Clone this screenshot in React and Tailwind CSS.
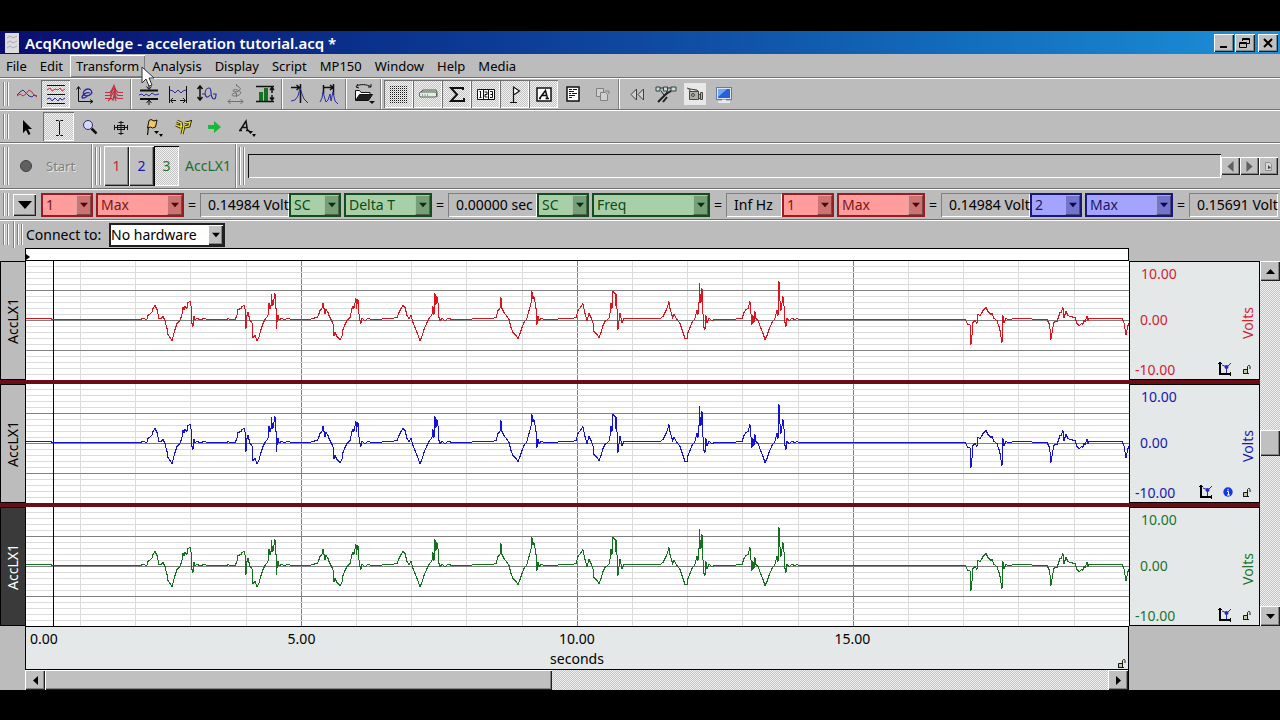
import React from 'react';
import clsx from 'clsx';

const CHANNELS = [
  { id: 1, label: 'AccLX1', color: '#dc1420', text: 'text-[#d02434]', active: false, info: false },
  { id: 2, label: 'AccLX1', color: '#1414d0', text: 'text-[#1818b0]', active: false, info: true },
  { id: 3, label: 'AccLX1', color: '#147020', text: 'text-[#1e742c]', active: true, info: false },
];

const MENUS = ['File', 'Edit', 'Transform', 'Analysis', 'Display', 'Script', 'MP150', 'Window', 'Help', 'Media'];

const MEASUREMENTS = [
  { tone: 'red', channel: '1', kind: 'Max', value: '0.14984 Volts' },
  { tone: 'green', channel: 'SC', kind: 'Delta T', value: '0.00000 sec' },
  { tone: 'green', channel: 'SC', kind: 'Freq', value: 'Inf Hz', wide: true },
  { tone: 'red', channel: '1', kind: 'Max', value: '0.14984 Volts' },
  { tone: 'blue', channel: '2', kind: 'Max', value: '0.15691 Volts' },
];

const TONES = {
  white: { box: 'bg-white border-[#202020] text-black', btn: 'bg-[#bcbcbc]' },
  red: { box: 'bg-[#ff9c9c] border-[#981c20] text-[#781818]', btn: 'bg-[#cc7474] text-[#500808]' },
  green: { box: 'bg-[#a8d0a8] border-[#144c1c] text-[#104818]', btn: 'bg-[#78a078] text-[#083010]' },
  blue: { box: 'bg-[#a4a4ff] border-[#181878] text-[#181860]', btn: 'bg-[#7474cc] text-[#080850]' },
};

const RAISED = 'bg-[#c0c0c0] shadow-[inset_1px_1px_#fff,inset_-1px_-1px_#202020,inset_-2px_-2px_#848484]';
const DITHER = 'bg-[repeating-conic-gradient(#f2f2f2_0_25%,#c2c2c2_0_50%)] bg-[length:2px_2px]';

const WAVE =
  '0,57 24,57 27,58 114,58 117,57 121,58 122,54 126,51 127,47 129,44 131,48 133,57 135,57 137,55 139,59 141,67 142,73 144,76 146,79 147,76 149,68 151,62 154,59 156,53 157,46 158,48 159,45 161,47 162,41 164,40 165,44 166,62 167,65 168,55 169,58 171,57 174,58 179,57 181,58 201,58 202,57 204,58 209,58 211,54 212,48 215,47 216,45 218,44 219,47 220,67 221,54 222,51 224,59 226,61 227,76 229,74 231,79 233,76 235,68 237,62 239,58 242,54 243,42 244,47 245,44 245,32 247,44 248,38 249,32 250,47 250,67 252,54 253,58 256,57 258,58 262,57 266,58 ' +
  '284,58 286,57 291,56 292,55 294,49 296,47 297,42 298,47 299,52 300,48 302,51 303,54 305,58 307,62 308,74 309,71 311,75 314,78 316,75 317,68 319,63 321,59 324,56 326,47 327,45 328,47 330,37 330,47 332,38 333,52 334,59 335,62 336,57 339,59 342,57 346,58 ' +
  '366,57 371,56 373,51 375,47 377,44 379,46 381,54 383,57 385,54 387,61 389,66 391,71 394,79 396,75 398,68 401,61 403,57 406,53 407,45 408,53 409,32 410,43 411,35 412,41 413,56 414,59 416,57 419,59 422,57 427,58 ' +
  '466,57 470,56 472,49 474,47 475,36 476,47 478,51 481,55 483,58 485,66 487,71 490,74 492,77 494,72 496,66 498,61 501,57 503,49 505,42 506,30 507,37 508,35 509,40 510,47 510,59 511,63 512,55 513,59 515,57 519,58 ' +
  '546,57 550,56 552,49 555,45 557,42 559,52 561,59 563,52 565,56 567,61 568,70 571,73 573,76 575,71 577,64 579,60 583,57 584,52 585,42 586,47 587,30 589,32 589,44 590,32 591,47 592,68 594,52 596,61 598,57 ' +
  '634,57 637,55 640,49 642,44 643,40 644,47 646,54 646,57 648,53 651,58 654,62 657,71 659,77 661,77 662,71 664,66 666,61 669,57 671,49 672,53 673,41 673,21 674,32 675,41 676,27 677,52 678,66 679,68 680,54 681,61 683,57 686,59 689,58 ' +
  '709,58 711,57 716,57 718,51 720,48 722,47 724,40 725,52 726,63 727,54 728,61 729,50 730,57 732,59 735,67 737,72 739,78 741,74 743,68 746,61 749,57 751,49 752,54 753,20 754,39 755,49 757,35 757,36 758,44 759,61 760,65 761,57 763,59 766,57 769,58 771,57 773,58 ' +
  '939,58 942,63 944,63 945,83 946,74 947,61 949,59 951,62 952,53 954,54 956,51 957,49 960,46 962,50 965,53 966,52 968,57 971,59 973,65 974,69 976,81 977,54 978,61 980,57 982,58 991,57 ' +
  '1021,58 1023,62 1024,67 1025,78 1027,66 1028,61 1029,60 1031,60 1032,57 1034,51 1035,51 1037,46 1038,56 1040,50 1042,54 1044,55 1049,56 1051,62 1053,64 1056,62 1057,63 1058,59 1059,60 1061,55 1062,59 1063,57 1096,57 1098,61 1100,73 1102,64 1103,62';

/* ---------- small shared pieces ---------- */

function Icon({ children, size = 22 }) {
  return (
    <svg
      width={size}
      height={size}
      viewBox="0 0 22 22"
      fill="none"
      stroke="#101010"
      strokeWidth="1"
      className="shrink-0"
      aria-hidden="true"
    >
      {children}
    </svg>
  );
}

function Arrow({ dir = 'down', size = 9 }) {
  const d = { down: 'M0 2h9L4.5 7z', up: 'M0 7h9L4.5 2z', left: 'M7 0v9L2 4.5z', right: 'M2 0v9L7 4.5z' }[dir];
  return (
    <svg width={size} height={size} viewBox="0 0 9 9" fill="currentColor" aria-hidden="true">
      <path d={d} />
    </svg>
  );
}

function Grip() {
  return <div className="w-[5px] shrink-0 self-stretch my-[3px] border-x border-[#808080] shadow-[inset_1px_0_#fff,inset_-1px_0_#d8d8d8,1px_0_#fff]" />;
}

function Sep() {
  return (
    <div className="flex w-[6px] shrink-0 justify-center self-stretch">
      <div className="w-[2px] border-l border-[#808080] bg-white" />
    </div>
  );
}

function Bar({ className, children }) {
  return (
    <div className={clsx('flex items-center overflow-hidden border-t border-t-white border-b border-b-[#707070] pl-[3px]', className)}>
      {children}
    </div>
  );
}

function Combo({ tone, value, label, className }) {
  const t = TONES[tone];
  return (
    <div className={clsx('relative flex h-6 shrink-0 border-2', t.box, className)}>
      <select aria-label={label} defaultValue={value} className="h-full w-full appearance-none bg-transparent pl-[3px] outline-none">
        <option>{value}</option>
      </select>
      <span
        className={clsx(
          'pointer-events-none absolute inset-y-0 right-0 flex w-[15px] items-center justify-center shadow-[inset_1px_1px_#ffffff60,inset_-1px_-1px_#00000060]',
          t.btn,
        )}
      >
        <Arrow size={8} />
      </span>
    </div>
  );
}

/* ---------- toolbar icons ---------- */

const BLUE = '#2c2ca0';
const RED = '#c03040';

const ICONS = {
  overlap: (
    <Icon>
      <path stroke={BLUE} d="M1 12l3-3 3-2 3 3 3 3 3 1 2-2 3 1" />
      <path stroke={RED} d="M1 13l3-2 3 2 3-2 3-4 3 2 2 3 3 2" />
    </Icon>
  ),
  stacked: (
    <Icon>
      <path d="M2 2.500h18M2 11.500h18M2 20.500h18" />
      <path stroke={RED} d="M2 7l3-2 2 3 3-2 3 1 2-2 2 3 3-2" />
      <path stroke={BLUE} d="M2 16l3-1 2 3 3-3 3 3 2-3 2 2 3-2" />
    </Icon>
  ),
  xy: (
    <Icon>
      <path d="M4.500 4v14.500h14M2.500 6.500l2-3 2 3M16 16.500l3 2-3 2" />
      <path stroke={BLUE} strokeWidth="1.300" d="M8 15c0-4 5-6 8-5M10 12c-2-3 1-6 4-6s5 3 3 5-5 2-7 1M8 15c3 0 5-1 6-3" />
    </Icon>
  ),
  scope: (
    <Icon>
      <path stroke={RED} strokeWidth="1.200" d="M2 9.500h5l2-3 2-4 2 5 2 2h5M2 12.500h5l2-4 2-3 2 5 2 2h5M2 15.500h5l2-4 2-3 2 6 2 1h5M5 18l3-3 2 2 1-5 2 6" />
    </Icon>
  ),
  autoY: (
    <Icon>
      <path strokeWidth="2" d="M2 7.500h18M2 16h18" />
      <path d="M11 1v5M8.500 3.500l2.500 3 2.500-3M11 22v-5M8.500 20l2.500-3 2.500 3" />
      <path stroke={BLUE} d="M1 12l3-1 2 2 2-2 3 2 3-3 3 2 4-1" />
    </Icon>
  ),
  autoX: (
    <Icon>
      <path d="M2.500 3v17M19.500 3v17M4 17.500h5M6 15l-2.500 2.500L6 20M18 17.500h-5M16 15l2.500 2.500L16 20" />
      <path stroke={BLUE} d="M3 7l3 1 2 2 3-3 3 3 2-2 3-1" />
    </Icon>
  ),
  zoomY: (
    <Icon>
      <path strokeWidth="1.500" d="M4 3v14M1.500 6L4 3l2.500 3M1.500 14L4 17l2.500-3" />
      <path stroke={BLUE} strokeWidth="1.200" d="M6 11h3c0-4 2-6 4-6s2 3 2 5 1 6 3 6 2-3 2-5h-3M9 11c1 4 3 4 5 1" />
    </Icon>
  ),
  zoomX: (
    <Icon>
      <g stroke="#707070">
        <path d="M3 18.500h15M5.500 16L3 18.500 5.500 21M15.500 16l2.500 2.500-2.500 2.500" />
        <path d="M11.500 1v2c4 1 5 3 2 5s-7 0-5-1 6 0 7 2-2 4-6 4-3-3 2-3v4" />
      </g>
    </Icon>
  ),
  bars: (
    <Icon>
      <path stroke="none" fill="#187028" d="M5 9h4v9H5zM10 5h4v13h-4z" />
      <path d="M2 3.500h18M2 18.500h18M18 5v5M16 7l2-2.500L20 7M18 17v-5M16 14.500l2 2.500 2-2.500" strokeWidth="1.500" />
    </Icon>
  ),
  peak: (
    <Icon>
      <path d="M2 4.500h8M7.500 2l3 2.500-3 2.500M11.500 1v19" strokeWidth="1.500" />
      <path stroke={BLUE} d="M2 18l4-1 3-4 2-8 2 6 2 5 4 4" />
    </Icon>
  ),
  peaks: (
    <Icon>
      <path d="M5 4.500h9M12 2l3 2.500-3 2.500M5.500 2v9M15.500 1v11" strokeWidth="1.500" />
      <path stroke={BLUE} d="M2 19l2-4 1-6 2 7 1 3 2-2 2-6 1 7 2-9 2 9 3 3" />
    </Icon>
  ),
  open: (
    <Icon>
      <path d="M4 3c3-2 10-2 14 1M18 1v3h-3M5 1L3 4l3 1" />
      <path fill="#fff" d="M2.500 17V7.500h4l1.500 2h9V12" />
      <path fill="#202020" d="M2.500 17.500l4-6h13l-4 6z" />
      <path fill="#101010" stroke="none" d="M16 18h6l-3 3z" />
    </Icon>
  ),
  grid: (
    <Icon>
      <path strokeDasharray="1 1" d="M2 3.500h18M2 5.500h18M2 7.500h18M2 9.500h18M2 11.500h18M2 13.500h18M2 15.500h18M2 17.500h18M2 19.500h18" shapeRendering="crispEdges" />
    </Icon>
  ),
  ruler: (
    <Icon>
      <rect x="2.500" y="9" width="17" height="5" rx="1.500" fill="#e4efe4" stroke="#506050" />
      <path stroke="#506050" d="M4 9l2-2h13l1 2v5M5 12h1M7.500 12h1M10 12h1" />
    </Icon>
  ),
  sigma: (
    <Icon>
      <path strokeWidth="2" d="M17 7V5H5l6 6.500-6 6.500h13v-3" />
    </Icon>
  ),
  digits: (
    <Icon>
      <path fill="#fff" d="M2.500 6.500h17v10h-17zM8.500 6v10M13.500 6v10" />
      <path d="M5.500 8v6M4.500 9l1-1M4.500 14.500h2M9.500 9h2.500v2.500h-2v2.500h2.500M15 8.500h2.500v6H15M15.500 11.500h2" />
    </Icon>
  ),
  flagTool: (
    <Icon>
      <path strokeWidth="1.200" d="M9.500 19V4l6 4-6 4M6 19.500h7" fill="#fff" />
    </Icon>
  ),
  textTool: (
    <Icon>
      <rect x="4" y="5" width="14" height="13" fill="#fff" strokeWidth="1.500" />
      <path strokeWidth="1.500" d="M6.500 15.500l6-8 2 8M9 12.500h4M6 15.500h2M12.500 15.500H16" />
    </Icon>
  ),
  journal: (
    <Icon>
      <rect x="5" y="4" width="12" height="14" fill="#fff" strokeWidth="1.500" />
      <path d="M7 6.500h3M11 6.500h4M7 8.500h5M7 10.500h2M10 10.500h5M7 12.500h6M7 14.500h3" />
    </Icon>
  ),
  copy: (
    <Icon>
      <g stroke="#808080">
        <path fill="#cfcfcf" d="M5.500 5.500h7v8h-7z" />
        <path fill="#cfcfcf" d="M9.500 9.500h5l2 2v6h-7z" />
        <path d="M14 8h4v3" />
      </g>
    </Icon>
  ),
  rewind: (
    <Icon>
      <path stroke="#404040" d="M10.500 6v11L5 11.500zM17.500 6v11L12 11.500z" fill="#d0d0d0" />
    </Icon>
  ),
  sync: (
    <Icon>
      <path stroke="#303030" d="M1 5h20" />
      <path fill="#c8dcdc" stroke="#304040" d="M1 4h4v4H1zM8.500 4h4v4h-4zM16 4h5v4h-5z" />
      <path strokeWidth="2" stroke="#202020" d="M3 19l6-6 2-2 5-3M8 19l4-5" />
      <path stroke="#202020" d="M6 8l3 4M12 8l-1 4" />
    </Icon>
  ),
  camera: (
    <Icon>
      <path fill="#b0b0a8" stroke="#484840" d="M5.500 8.500h9v8h-9zM14.500 11l2 1v3l-2 1M16.500 9.500h2v7h-2zM3 5l3 1v3M6 6l7 1 2 2" />
      <circle cx="9" cy="12" r="1.500" stroke="#484840" />
    </Icon>
  ),
  monitor: (
    <Icon>
      <rect x="3.500" y="4.500" width="15" height="12" fill="#dce4f0" stroke="#6878a0" />
      <rect x="5" y="6" width="12" height="9" fill="#2860d8" stroke="none" />
      <path stroke="none" fill="#70a8f8" d="M5 6h9l-9 8z" />
      <path stroke="#e8e8f0" strokeWidth="2" d="M5 19h12M9 17.500h4" />
    </Icon>
  ),
};

const TOOLBAR = [
  ['overlap', 'stacked', 'xy', 'scope'],
  ['autoY', 'autoX', 'zoomY', 'zoomX', 'bars'],
  ['peak', 'peaks'],
  ['open'],
  ['grid', 'ruler', 'sigma', 'digits', 'flagTool', 'textTool', 'journal', 'copy'],
  ['rewind', 'sync', 'camera', 'monitor'],
];
const PRESSED = ['stacked', 'grid', 'ruler', 'sigma', 'digits', 'flagTool', 'textTool'];

const TOOLS = [
  {
    name: 'Select',
    icon: (
      <Icon>
        <path fill="#000" d="M6 4v13l3-3 2.500 5 2-1-2.500-5h4z" stroke="none" />
      </Icon>
    ),
  },
  {
    name: 'I-beam',
    pressed: true,
    icon: (
      <Icon>
        <path d="M8 4.500h2.500l1 1 1-1H15M11.500 5.500v13M8 19.500h2.500l1-1 1 1H15" />
      </Icon>
    ),
  },
  {
    name: 'Zoom',
    icon: (
      <Icon>
        <circle cx="9" cy="9" r="4.500" fill="#d4d8ff" stroke="#303060" />
        <path strokeWidth="2.500" d="M12.500 12.500l5 5" />
      </Icon>
    ),
  },
  {
    name: 'Grid',
    icon: (
      <Icon>
        <path d="M4 11.500h14M11 5v14M4.500 9v5M17.500 9v5M7.500 9v5M14.500 9v5M8.500 6.500h5M8.500 17.500h5M7.500 9.500h7v4h-7z" />
      </Icon>
    ),
  },
  {
    name: 'Event',
    icon: (
      <Icon>
        <path d="M6.500 19L8 6" strokeWidth="1.200" />
        <path fill="#f4c860" d="M8 4.500l2-1 3 1.500 3-1-1.500 7-3 1-2-1-3 1z" />
        <path stroke="none" fill="#000" d="M13 15h5l-2.500 3zM18 18h4l-2 3z" />
      </Icon>
    ),
  },
  {
    name: 'Annotate',
    icon: (
      <Icon>
        <path strokeWidth="3" d="M5 5l4 2 1 4M4 9l5 2M9 6v7M10 18l2-8M13 6l2 1 3-1-1 4-4 1" />
        <path strokeWidth="1.400" stroke="#f0e020" d="M5 5l4 2 1 4M4 9l5 2M9 6v7M10 18l2-8M13 6l2 1 3-1-1 4-4 1" />
      </Icon>
    ),
  },
  {
    name: 'Next',
    icon: (
      <Icon>
        <path stroke="none" fill="#18b838" d="M5 9h6V5l7 6-7 6v-4H5z" />
      </Icon>
    ),
  },
  {
    name: 'Font',
    icon: (
      <Icon>
        <path strokeWidth="1.500" d="M6 14.500l6-9.500 1.500 9.500M8 11.500h5" />
        <path strokeWidth="1.500" d="M5 14.500h3M12 14.500h3.500" />
        <path stroke="none" fill="#000" d="M14 15h5l-2.500 3zM18 18h4l-2 3z" />
      </Icon>
    ),
  },
];

/* ---------- channels ---------- */

function LockIcon() {
  return (
    <svg width="9" height="11" viewBox="0 0 9 11" fill="none" stroke="#181818" aria-hidden="true">
      <path d="M1.500 5.500h4v4h-4z" fill="#c8c8a8" />
      <path d="M1 9.500h6M5.500 10V5V2.500L6.500 1.500h1l.500 1V5" />
    </svg>
  );
}

function AxisIcon() {
  return (
    <svg width="16" height="16" viewBox="0 0 16 16" fill="none" stroke="#000" aria-hidden="true">
      <path strokeWidth="2" d="M3 1v12h11" />
      <path d="M1 2.500h4M13.500 11v4" />
      <path stroke="#2828b0" d="M5 4l5 2 4-4M9.500 7v5" />
      <circle cx="9.500" cy="6" r="2" fill="#2828c8" stroke="none" />
    </svg>
  );
}

function InfoIcon() {
  return (
    <svg width="10" height="10" viewBox="0 0 10 10" aria-hidden="true">
      <circle cx="5" cy="5" r="4.700" fill="#1038e8" />
      <path d="M5 2v1.500M4 4.500h1.500V8M4 8h3" stroke="#fff" fill="none" />
    </svg>
  );
}

function Plot({ color }) {
  const minor = Array.from({ length: 19 }, (_, i) => 5.5 + i * 6);
  const cols = Array.from({ length: 19 }, (_, i) => 54.5 + i * 55.2);
  return (
    <svg viewBox="0 0 1103 119" preserveAspectRatio="none" className="block h-full w-full bg-white" shapeRendering="crispEdges" fill="none">
      {minor.map((y) => (
        <line key={y} x1="0" x2="1103" y1={y} y2={y} stroke="#dcdcdc" />
      ))}
      {cols.map((x, i) => (
        <line key={x} x1={x} x2={x} y1="0" y2="119" stroke={i % 5 === 4 ? '#808080' : '#dcdcdc'} strokeDasharray={i % 5 === 4 ? '5 1' : undefined} />
      ))}
      {[29.5, 59.5, 89.5].map((y) => (
        <line key={y} x1="0" x2="1103" y1={y} y2={y} stroke="#808080" />
      ))}
      <line x1="27.5" x2="27.5" y1="0" y2="119" stroke="#000" />
      <polyline points={WAVE} stroke={color} transform="translate(0 .5)" />
    </svg>
  );
}

function Channel({ channel }) {
  return (
    <div className="flex h-[119px]">
      <div
        className={clsx(
          'flex w-[26px] shrink-0 items-center justify-center border border-black',
          channel.active ? 'bg-[#3a3a3a] text-white' : 'bg-[#bcbcbc] text-black',
        )}
      >
        <span className="rotate-180 [writing-mode:vertical-rl]">{channel.label}</span>
      </div>
      <div className="min-w-0 flex-1">
        <Plot color={channel.color} />
      </div>
      <div className={clsx('flex w-[131px] shrink-0 justify-between border border-black bg-[#e4e8e8] pl-[5px]', channel.text)}>
        <div className="flex flex-col justify-between pt-[3px] leading-[18px]">
          <span className="pl-[6px]">10.00</span>
          <span className="pb-1 pl-[5px]">0.00</span>
          <span>-10.00</span>
        </div>
        <div className="flex flex-col items-end justify-end gap-[22px] pr-[2px] pb-[2px]">
          <span className="rotate-180 leading-[18px] [writing-mode:vertical-rl]">Volts</span>
          <div className="flex items-center gap-[9px] pr-[6px]">
            <AxisIcon />
            {channel.info && <InfoIcon />}
            <LockIcon />
          </div>
        </div>
      </div>
    </div>
  );
}

function WindowButton({ label, children }) {
  return (
    <button aria-label={label} className={clsx('flex h-[18px] w-5 items-center justify-center', RAISED)}>
      <svg width="14" height="14" viewBox="0 0 14 14" fill="none" stroke="#000" aria-hidden="true">
        {children}
      </svg>
    </button>
  );
}

export default function App() {
  return (
    <div className="min-h-screen bg-black pt-[31px] pb-[30px] font-['Noto_Sans',sans-serif] text-[14px] leading-5 text-black">
      <div className="bg-[#bcbcbc]">
        {/* Title bar */}
        <header className="flex h-[23px] items-center bg-linear-to-r from-[#0a0c70] via-[#1048a0] to-[#1c90d8] pr-[2px] pl-[5px]">
          <svg width="14" height="20" viewBox="0 0 14 20" aria-hidden="true">
            <rect width="14" height="20" fill="#dcdce0" />
            <path d="M2 5l3-2 3 2 4-2M2 10l3-2 3 2 4-2M2 15l3-2 3 2 4-2" stroke="#a8a8b0" fill="none" />
          </svg>
          <h1 className="ml-[6px] flex-1 text-[15px] font-semibold text-white">AcqKnowledge - acceleration tutorial.acq *</h1>
          <WindowButton label="Minimize">
            <path strokeWidth="2" d="M3 11h7" />
          </WindowButton>
          <div className="ml-px">
            <WindowButton label="Restore">
              <path d="M4.500 5V2.500h7v5H9M1.500 6.500h7v5h-7z" />
              <path d="M4 3.500h8M1 7.500h8" />
            </WindowButton>
          </div>
          <div className="ml-[3px]">
            <WindowButton label="Close">
              <path strokeWidth="2" d="M3 3l8 8M11 3l-8 8" />
            </WindowButton>
          </div>
        </header>

        {/* Menu bar */}
        <nav className="relative flex h-6 items-center gap-px border-b border-b-[#707070] text-[13px]">
          {MENUS.map((m) => (
            <button
              key={m}
              className={clsx('h-[22px] px-[6px]', m === 'Transform' && 'shadow-[inset_1px_1px_#fff,inset_-1px_-1px_#808080]')}
            >
              {m}
            </button>
          ))}
          <svg width="14" height="22" viewBox="0 0 14 22" className="pointer-events-none absolute top-3 left-[141px] z-10" aria-hidden="true">
            <path d="M1 1v16l4-4 3 7 3-1-3-7h5z" fill="#fff" stroke="#303030" />
          </svg>
        </nav>

        {/* Main toolbar */}
        <Bar className="h-8">
          <Grip />
          <div className="ml-1 flex items-center self-stretch">
            {TOOLBAR.map((group, g) => (
              <React.Fragment key={g}>
                {g > 0 && <Sep />}
                {group.map((name) => (
                  <button
                    key={name}
                    aria-label={name}
                    className={clsx(
                      'flex h-7 w-[29px] items-center justify-center',
                      PRESSED.includes(name) && [DITHER, 'shadow-[inset_1px_1px_#707070,inset_-1px_-1px_#fff]'],
                    )}
                  >
                    {name === 'camera' ? <span className="bg-[#e8e8e8]">{ICONS[name]}</span> : ICONS[name]}
                  </button>
                ))}
              </React.Fragment>
            ))}
          </div>
        </Bar>

        {/* Tool palette */}
        <Bar className="h-[33px]">
          <Grip />
          <div className="ml-1 flex items-center">
            {TOOLS.map((t) => (
              <button
                key={t.name}
                aria-label={t.name}
                className={clsx(
                  'flex h-[29px] w-[31px] items-center justify-center',
                  t.pressed && [DITHER, 'shadow-[inset_1px_1px_#707070,inset_-1px_-1px_#fff]'],
                )}
              >
                {t.icon}
              </button>
            ))}
          </div>
        </Bar>

        {/* Acquisition row */}
        <Bar className="h-[46px]">
          <Grip />
          <button className="flex w-[83px] items-center gap-[14px] pl-3 text-[13px] text-[#808080] [text-shadow:1px_1px_#e8e8e8]">
            <span className="size-3 rounded-full border border-[#404040] bg-[#606060]" />
            Start
          </button>
          <div className="mr-[2px] w-[2px] self-stretch border-l border-[#808080] bg-white" />
          <Grip />
          <div className="ml-1 flex h-10">
            {CHANNELS.map((c) => (
              <button
                key={c.id}
                className={clsx(
                  'w-[25px]',
                  c.text,
                  c.active ? [DITHER, 'shadow-[inset_1px_1px_#000,inset_-1px_-1px_#fff]'] : RAISED,
                )}
              >
                {c.id}
              </button>
            ))}
          </div>
          <span className="w-[56px] pl-[6px] text-[#1e6e2c]">AccLX1</span>
          <div className="mr-[2px] w-[2px] self-stretch border-l border-[#808080] bg-white" />
          <Grip />
          <div className="ml-1 h-6 min-w-0 flex-1 shadow-[inset_1px_1px_#101010,inset_-1px_-1px_#fff]" />
          <div className="flex pr-[2px] text-[#606060]">
            <button aria-label="Previous event" className={clsx('flex h-[18px] w-[19px] items-center justify-center', RAISED)}>
              <Arrow dir="left" size={11} />
            </button>
            <button aria-label="Next event" className={clsx('flex h-[18px] w-[19px] items-center justify-center', RAISED)}>
              <Arrow dir="right" size={11} />
            </button>
            <button aria-label="Event menu" className={clsx('flex h-[18px] w-[19px] items-center justify-center', RAISED)}>
              <svg width="9" height="11" viewBox="0 0 9 11" fill="none" stroke="#909090" aria-hidden="true">
                <path d="M1.500 1.500h4l2 2v6h-6z" fill="#d8d8d8" />
                <path d="M4 4l3 3-3 1z" fill="#404040" stroke="none" />
              </svg>
            </button>
          </div>
        </Bar>

        {/* Measurements */}
        <Bar className="h-[31px]">
          <Grip />
          <button aria-label="Measurement options" className={clsx('mr-[5px] ml-[5px] flex h-[22px] w-[23px] shrink-0 items-center justify-center', RAISED)}>
            <Arrow size={14} />
          </button>
          {MEASUREMENTS.map((m, i) => (
            <div key={i} className="flex shrink-0 items-center">
              <Combo tone={m.tone} value={m.channel} label={`Channel ${i + 1}`} className="mr-[3px] w-[52px]" />
              <Combo tone={m.tone} value={m.kind} label={`Measurement ${i + 1}`} className={m.wide ? 'w-[118px]' : 'w-[88px]'} />
              <span className="w-4 text-center">=</span>
              <output
                className={clsx(
                  'block h-6 overflow-hidden pl-[8px] leading-6 whitespace-nowrap shadow-[inset_1px_1px_#808080,inset_-1px_-1px_#fff]',
                  m.wide ? 'w-[56px]' : 'w-[89px]',
                )}
              >
                {m.value}
              </output>
            </div>
          ))}
        </Bar>

        {/* Hardware */}
        <div className="flex h-7 items-center border-t border-t-white pl-[3px]">
          <Grip />
          <div className="mr-[2px] ml-[5px] w-[2px] self-stretch border-l border-[#808080] bg-white" />
          <Grip />
          <label htmlFor="hardware" className="w-[87px] pl-[4px] whitespace-nowrap">
            Connect to:
          </label>
          <div className="relative h-6 w-[116px] border-2 border-[#202020] bg-white">
            <select id="hardware" defaultValue="No hardware" className="h-full w-full appearance-none bg-transparent outline-none">
              <option>No hardware</option>
            </select>
            <span className={clsx('pointer-events-none absolute inset-y-0 right-0 flex w-[15px] items-center justify-center', RAISED)}>
              <Arrow size={8} />
            </span>
          </div>
        </div>

        {/* Event strip */}
        <div className="flex h-[13px] pr-[151px] pl-[25px]">
          <div className="flex flex-1 items-end border border-black bg-white">
            <svg width="4" height="6" viewBox="0 0 4 6" aria-hidden="true">
              <path d="M0 0l4 3-4 3z" />
            </svg>
          </div>
        </div>

        {/* Channels */}
        <div className="flex">
          <div className="flex min-w-0 flex-1 flex-col gap-1 bg-[#6c0c14]">
            {CHANNELS.map((c) => (
              <Channel key={c.id} channel={c} />
            ))}
          </div>
          <div className={clsx('flex w-5 flex-col', DITHER)}>
            <button aria-label="Scroll up" className={clsx('flex h-5 items-center justify-center', RAISED)}>
              <Arrow dir="up" />
            </button>
            <div className="flex-1" />
            <div className={clsx('h-[26px]', RAISED)} />
            <div className="h-[150px]" />
            <button aria-label="Scroll down" className={clsx('flex h-5 items-center justify-center', RAISED)}>
              <Arrow />
            </button>
          </div>
        </div>

        {/* Time axis */}
        <div className="pr-[151px] pl-[25px]">
          <div className="h-11 border border-black bg-[#e4e8e8] pt-[2px]">
            <div className="grid grid-cols-[1fr_2fr_2fr_2fr_1fr] text-center">
              <span className="pl-1 text-left">0.00</span>
              <span>5.00</span>
              <span>10.00</span>
              <span>15.00</span>
            </div>
            <div className="grid grid-cols-[1fr_auto_1fr] items-center">
              <span className="col-start-2">seconds</span>
              <span className="justify-self-end pt-2 pr-[2px]">
                <LockIcon />
              </span>
            </div>
          </div>
          <div className={clsx('flex h-5 border-r border-black', DITHER)}>
            <button aria-label="Scroll left" className={clsx('flex w-5 items-center justify-center', RAISED)}>
              <Arrow dir="left" />
            </button>
            <div className={clsx('w-[46%]', RAISED)} />
            <div className="flex-1" />
            <button aria-label="Scroll right" className={clsx('flex w-5 items-center justify-center', RAISED)}>
              <Arrow dir="right" />
            </button>
          </div>
        </div>
      </div>
    </div>
  );
}
